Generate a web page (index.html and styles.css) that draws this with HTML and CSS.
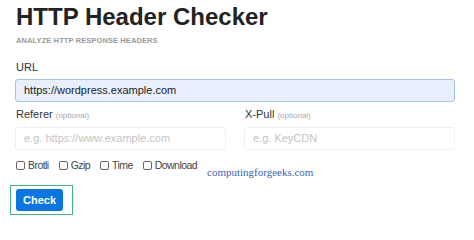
FILE: index.html
```html
<!DOCTYPE html>
<html>
<head>
<meta charset="utf-8">
<link rel="stylesheet" href="styles.css">
</head>
<body>
<div class="page">
  <h1 class="title">HTTP Header Checker</h1>
  <div class="subtitle">ANALYZE HTTP RESPONSE HEADERS</div>
  <form class="form">
    <label class="label">URL</label>
    <div class="input input-filled">https://wordpress.example.com</div>
    <div class="row">
      <div class="col">
        <label class="label">Referer <span class="opt">(optional)</span></label>
        <div class="input input-empty">e.g. https://www.example.com</div>
      </div>
      <div class="col">
        <label class="label">X-Pull <span class="opt">(optional)</span></label>
        <div class="input input-empty">e.g. KeyCDN</div>
      </div>
    </div>
    <div class="checks">
      <span class="check"><span class="box"></span>Brotli</span>
      <span class="check"><span class="box"></span>Gzip</span>
      <span class="check"><span class="box"></span>Time</span>
      <span class="check"><span class="box"></span>Download</span>
    </div>
    <div class="btn-wrap"><span class="btn">Check</span></div>
  </form>
  <div class="watermark">computingforgeeks.com</div>
</div>
</body>
</html>
```

FILE: styles.css
```css
html, body {
  margin: 0;
  padding: 0;
  background: #ffffff;
}
.page {
  position: relative;
  width: 474px;
  height: 228px;
  padding: 0 19px 0 15px;
  box-sizing: border-box;
  font-family: "Liberation Sans", Arial, sans-serif;
  color: #333;
  overflow: hidden;
}
.title {
  margin: 3px 0 0 1px;
  font-size: 24px;
  font-weight: bold;
  line-height: 28px;
  color: #222;
}
.subtitle {
  margin: 5px 0 0 1px;
  font-size: 7.5px;
  font-weight: bold;
  line-height: 9px;
  color: #9a9a9a;
  letter-spacing: 0.1px;
}
.form {
  display: flex;
  flex-direction: column;
  margin-top: 16px;
}
.label {
  display: block;
  margin-left: 1px;
  font-size: 11px;
  line-height: 13px;
  color: #333;
}
.opt {
  font-size: 8px;
  color: #aaa;
}
.input {
  box-sizing: border-box;
  height: 23px;
  margin-top: 5px;
  padding: 0 8px;
  font-size: 11px;
  line-height: 21px;
  border-radius: 3px;
}
.input-filled {
  background: #e8f0fe;
  border: 1px solid #a9c1e3;
  color: #222;
}
.input-empty {
  border: 1px solid #f0f0f0;
  color: #c4c4c4;
}
.row {
  display: grid;
  grid-template-columns: 211px 211px;
  column-gap: 18px;
  margin-top: 6px;
}
.checks {
  display: flex;
  gap: 10px;
  margin: 9px 0 0 1px;
  font-size: 10.5px;
  letter-spacing: -0.55px;
  line-height: 12px;
  color: #444;
}
.check {
  display: flex;
  align-items: center;
}
.box {
  display: inline-block;
  width: 7px;
  height: 7px;
  margin-right: 3px;
  border: 1px solid #666;
  border-radius: 2px;
}
.btn-wrap {
  align-self: flex-start;
  margin: 14px 0 0 -5px;
  padding: 3px 9px 3px 5px;
  border: 1.5px solid #3fb67c;
}
.btn {
  display: block;
  width: 47px;
  height: 22px;
  background: #0b76df;
  color: #fff;
  font-size: 11px;
  font-weight: bold;
  line-height: 22px;
  text-align: center;
  border-radius: 3px;
}
.watermark {
  position: absolute;
  left: 207px;
  top: 166px;
  font-family: "Liberation Serif", "Times New Roman", serif;
  font-size: 11px;
  color: #3d5fb4;
}
```
